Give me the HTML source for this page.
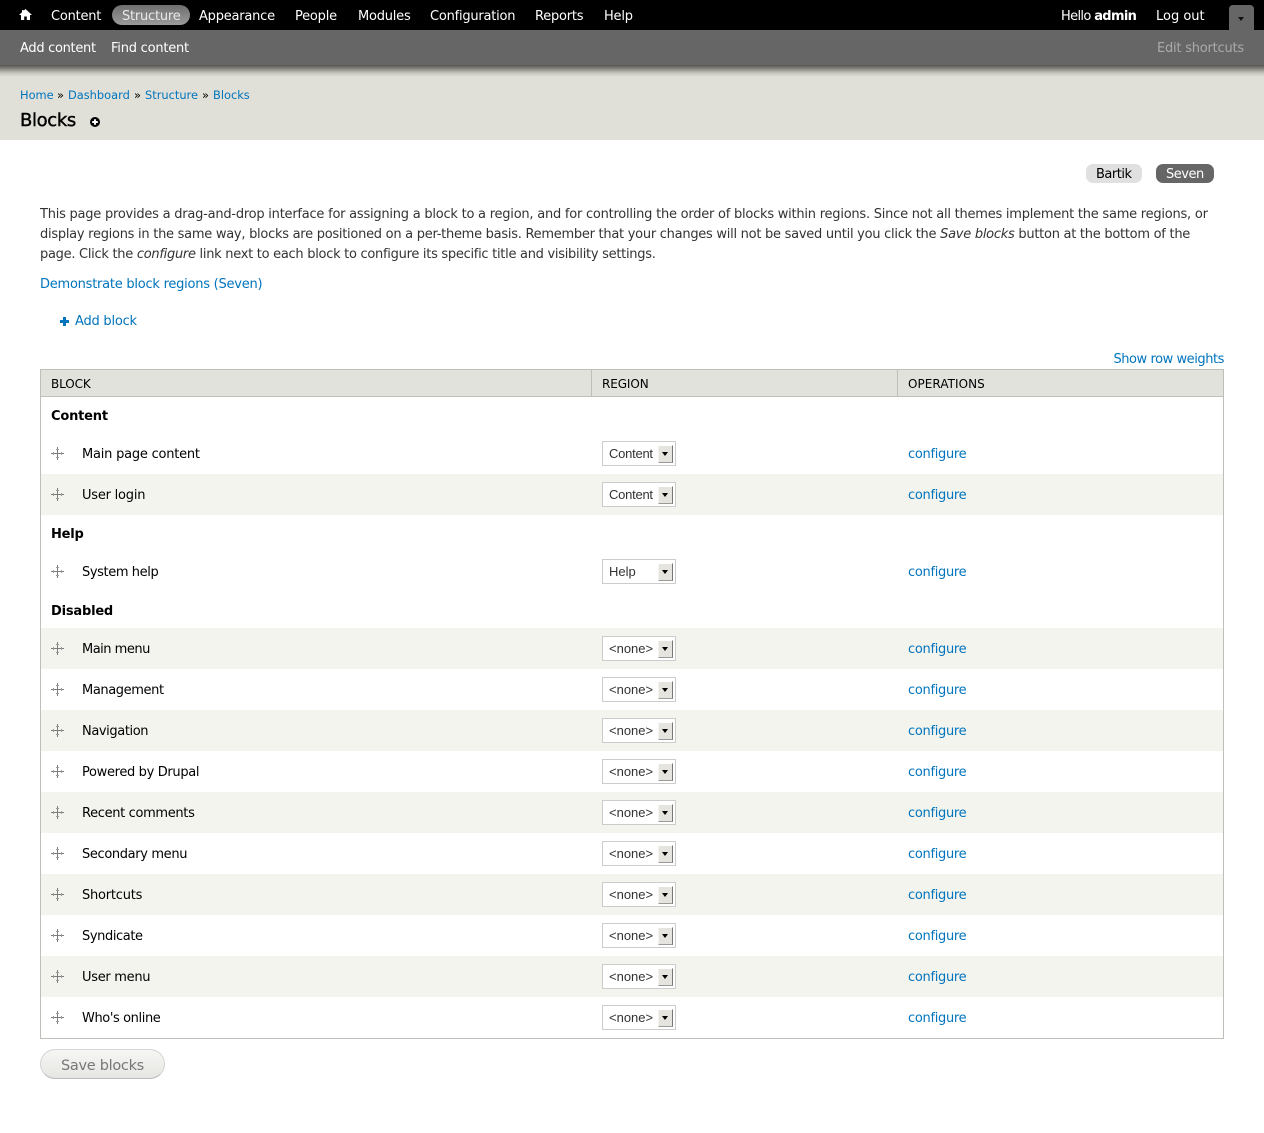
<!DOCTYPE html>
<html><head><meta charset="utf-8"><title>Blocks</title>
<style>
html,body{margin:0;padding:0;background:#fff}
body{position:relative;width:1264px;height:1133px;overflow:hidden;font-family:"DejaVu Sans",sans-serif;font-size:13px;color:#000;letter-spacing:-.22px}
.t{position:absolute;white-space:nowrap;line-height:20px}
.w{color:#fff}
a,.l{color:#0074bd;text-decoration:none}
.abs{position:absolute}
.row{position:absolute;left:41px;width:1182px;height:41px}
.alt{background:#f3f4ee}
.name{position:absolute;left:41px;top:12px;line-height:20px;white-space:nowrap;letter-spacing:-.4px}
.cfg{position:absolute;left:867px;top:12px;line-height:20px;color:#0074bd;letter-spacing:-.3px}
.hd{position:absolute;left:51px;font-weight:bold;line-height:20px}
.sel{position:absolute;left:561px;top:8px;width:72px;height:23px;border:1px solid #ccc;background:#fff;font-family:"Liberation Sans",sans-serif;font-size:13px;letter-spacing:0;line-height:24px;color:#333}
.sel span{position:absolute;left:6px;top:0}
.sel .c{letter-spacing:-.25px}
.sel i{position:absolute;left:55px;top:3px;width:13px;height:16px;background:#e6e4df;border-left:1px solid #f4f3f0;border-top:1px solid #fff;border-right:1px solid #777;border-bottom:1px solid #999}
.sel i:after{content:"";position:absolute;left:3px;top:6px;border-left:3.5px solid transparent;border-right:3.5px solid transparent;border-top:4px solid #000}
.drag{position:absolute;left:10px;top:14px;width:13px;height:13px}
</style></head><body>
<div class="abs" style="left:0;top:0;width:1264px;height:30px;background:#000"></div>
<div class="abs" style="left:0;top:30px;width:1264px;height:35px;background:#666"></div>
<div class="abs" style="left:0;top:65px;width:1264px;height:75px;background:#e0e0d8"></div>
<div class="abs" style="left:0;top:65px;width:1264px;height:12px;background:linear-gradient(#55554f,#8d8d86 35%,#c9c9c1 70%,#e0e0d8)"></div>

<svg class="abs" style="left:19px;top:8px" width="13" height="13" viewBox="0 0 13 13"><path d="M6.5 1 L13 7 H11 V12 H7.8 V8.5 H5.2 V12 H2 V7 H0 L3 4.2 V2 H4.6 V2.8 Z" fill="#fff"/></svg>
<div class="t w" style="left:51px;top:7px">Content</div>
<div class="abs" style="left:112px;top:5px;width:78px;height:20px;border-radius:10px;background:linear-gradient(#6f6f6f,#9a9a9a)"></div>
<div class="t" style="left:122px;top:7px;color:#e8e8e8">Structure</div>
<div class="t w" style="left:199px;top:7px">Appearance</div>
<div class="t w" style="left:295px;top:7px">People</div>
<div class="t w" style="left:358px;top:7px">Modules</div>
<div class="t w" style="left:430px;top:7px">Configuration</div>
<div class="t w" style="left:535px;top:7px">Reports</div>
<div class="t w" style="left:604px;top:7px">Help</div>
<div class="t w" style="left:1061px;top:7px;letter-spacing:-.65px">Hello <b>admin</b></div>
<div class="t w" style="left:1156px;top:7px;letter-spacing:0">Log out</div>
<div class="abs" style="left:1229px;top:5px;width:25px;height:25px;background:#666;border-radius:4px 4px 0 0"></div>
<div class="abs" style="left:1238px;top:17px;border-left:3.5px solid transparent;border-right:3.5px solid transparent;border-top:4px solid #111"></div>

<div class="t w" style="left:20px;top:39px;letter-spacing:-.3px">Add content</div>
<div class="t w" style="left:111px;top:39px">Find content</div>
<div class="t" style="left:1157px;top:39px;color:#aaa">Edit shortcuts</div>

<div class="t" style="left:20px;top:85px;font-size:11.4px;letter-spacing:0"><a>Home</a></div>
<div class="t" style="left:57px;top:85px;font-size:11.4px;letter-spacing:0">»</div>
<div class="t" style="left:68px;top:85px;font-size:11.4px;letter-spacing:0"><a>Dashboard</a></div>
<div class="t" style="left:134px;top:85px;font-size:11.4px;letter-spacing:0">»</div>
<div class="t" style="left:145px;top:85px;font-size:11.4px;letter-spacing:0"><a>Structure</a></div>
<div class="t" style="left:202px;top:85px;font-size:11.4px;letter-spacing:0">»</div>
<div class="t" style="left:213px;top:85px;font-size:11.4px;letter-spacing:0"><a>Blocks</a></div>
<div class="t" style="left:20px;top:111px;font-size:18px;letter-spacing:-.35px;-webkit-text-stroke:.4px #000">Blocks</div>
<svg class="abs" style="left:90px;top:117px" width="10" height="10" viewBox="0 0 10 10"><circle cx="5" cy="5" r="5" fill="#000"/><path d="M2.2 5H7.8M5 2.2V7.8" stroke="#fff" stroke-width="2"/></svg>

<div class="abs" style="left:1086px;top:164px;width:56px;height:19px;border-radius:7px;background:#e0e0e0"></div>
<div class="t" style="left:1096px;top:165px;letter-spacing:-.5px">Bartik</div>
<div class="abs" style="left:1156px;top:164px;width:58px;height:19px;border-radius:7px;background:#666"></div>
<div class="t w" style="left:1166px;top:165px;letter-spacing:-.5px">Seven</div>

<div class="t" style="left:40px;top:205px;color:#333;letter-spacing:-.232px">This page provides a drag-and-drop interface for assigning a block to a region, and for controlling the order of blocks within regions. Since not all themes implement the same regions, or</div>
<div class="t" style="left:40px;top:225px;color:#333;letter-spacing:-.266px">display regions in the same way, blocks are positioned on a per-theme basis. Remember that your changes will not be saved until you click the <em>Save blocks</em> button at the bottom of the</div>
<div class="t" style="left:40px;top:245px;color:#333;letter-spacing:-.28px">page. Click the <em>configure</em> link next to each block to configure its specific title and visibility settings.</div>
<div class="t l" style="left:40px;top:275px;letter-spacing:-.24px">Demonstrate block regions (Seven)</div>
<svg class="abs" style="left:60px;top:317px" width="9" height="9" viewBox="0 0 9 9"><path d="M4.5 0V9M0 4.5H9" stroke="#0074bd" stroke-width="3"/></svg>
<div class="t l" style="left:75px;top:312px">Add block</div>
<div class="t l" style="right:40px;top:350px;letter-spacing:-.44px">Show row weights</div>

<div class="abs" style="left:40px;top:369px;width:1182px;height:668px;border:1px solid #bebfb9"></div>
<div class="abs" style="left:41px;top:370px;width:1182px;height:26px;background:#e1e2dc;border-bottom:1px solid #bebfb9"></div>
<div class="abs" style="left:591px;top:370px;width:1px;height:26px;background:#bebfb9"></div>
<div class="abs" style="left:897px;top:370px;width:1px;height:26px;background:#bebfb9"></div>
<div class="t" style="left:51px;top:374px;font-size:12px;letter-spacing:-.1px">BLOCK</div>
<div class="t" style="left:602px;top:374px;font-size:12px;letter-spacing:-.1px">REGION</div>
<div class="t" style="left:908px;top:374px;font-size:12px;letter-spacing:.05px">OPERATIONS</div>

<div class="hd" style="top:407px;letter-spacing:-.2px">Content</div>
<div class="hd" style="top:525px;letter-spacing:-.2px">Help</div>
<div class="hd" style="top:602px;letter-spacing:-.2px">Disabled</div>

<svg width="0" height="0" style="position:absolute"><defs><symbol id="d" viewBox="0 0 13 13"><path d="M6.5 0V13M0 6.5H13" stroke="#7d7d7d" stroke-width="1" fill="none" shape-rendering="crispEdges"/><path d="M5 2.5H8M5 10.5H8M2.5 5V8M10.5 5V8" stroke="#9a9a9a" stroke-width="1" fill="none" shape-rendering="crispEdges"/></symbol></defs></svg>

<div class="row" style="top:433px"><svg class="drag"><use href="#d"/></svg><div class="name" style="letter-spacing:-.22px">Main page content</div><div class="sel"><span class="c">Content</span><i></i></div><div class="cfg">configure</div></div>
<div class="row alt" style="top:474px"><svg class="drag"><use href="#d"/></svg><div class="name" style="letter-spacing:-.22px">User login</div><div class="sel"><span class="c">Content</span><i></i></div><div class="cfg">configure</div></div>
<div class="row" style="top:551px"><svg class="drag"><use href="#d"/></svg><div class="name">System help</div><div class="sel"><span>Help</span><i></i></div><div class="cfg">configure</div></div>
<div class="row alt" style="top:628px"><svg class="drag"><use href="#d"/></svg><div class="name" style="letter-spacing:-.5px">Main menu</div><div class="sel"><span>&lt;none&gt;</span><i></i></div><div class="cfg">configure</div></div>
<div class="row" style="top:669px"><svg class="drag"><use href="#d"/></svg><div class="name">Management</div><div class="sel"><span>&lt;none&gt;</span><i></i></div><div class="cfg">configure</div></div>
<div class="row alt" style="top:710px"><svg class="drag"><use href="#d"/></svg><div class="name">Navigation</div><div class="sel"><span>&lt;none&gt;</span><i></i></div><div class="cfg">configure</div></div>
<div class="row" style="top:751px"><svg class="drag"><use href="#d"/></svg><div class="name" style="letter-spacing:-.34px">Powered by Drupal</div><div class="sel"><span>&lt;none&gt;</span><i></i></div><div class="cfg">configure</div></div>
<div class="row alt" style="top:792px"><svg class="drag"><use href="#d"/></svg><div class="name" style="letter-spacing:-.34px">Recent comments</div><div class="sel"><span>&lt;none&gt;</span><i></i></div><div class="cfg">configure</div></div>
<div class="row" style="top:833px"><svg class="drag"><use href="#d"/></svg><div class="name" style="letter-spacing:-.36px">Secondary menu</div><div class="sel"><span>&lt;none&gt;</span><i></i></div><div class="cfg">configure</div></div>
<div class="row alt" style="top:874px"><svg class="drag"><use href="#d"/></svg><div class="name" style="letter-spacing:-.22px">Shortcuts</div><div class="sel"><span>&lt;none&gt;</span><i></i></div><div class="cfg">configure</div></div>
<div class="row" style="top:915px"><svg class="drag"><use href="#d"/></svg><div class="name">Syndicate</div><div class="sel"><span>&lt;none&gt;</span><i></i></div><div class="cfg">configure</div></div>
<div class="row alt" style="top:956px"><svg class="drag"><use href="#d"/></svg><div class="name" style="letter-spacing:-.3px">User menu</div><div class="sel"><span>&lt;none&gt;</span><i></i></div><div class="cfg">configure</div></div>
<div class="row" style="top:997px;height:40px"><svg class="drag"><use href="#d"/></svg><div class="name">Who's online</div><div class="sel"><span>&lt;none&gt;</span><i></i></div><div class="cfg">configure</div></div>

<div class="abs" style="left:40px;top:1049px;width:123px;height:28px;border:1px solid #d4d4d4;border-radius:15px;background:linear-gradient(#f6f6f4,#e6e6e3);border-bottom-color:#bbb"></div>
<div class="t" style="left:61px;top:1056px;font-size:14.5px;color:#777;letter-spacing:-.3px">Save blocks</div>
</body></html>
